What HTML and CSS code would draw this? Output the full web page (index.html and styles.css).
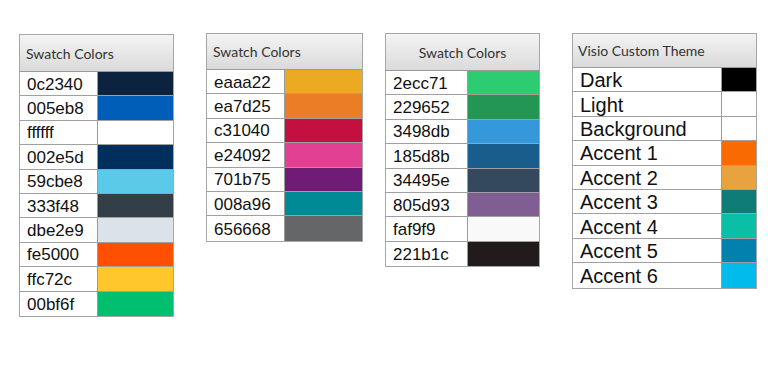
FILE: index.html
```html
<!DOCTYPE html>
<html>
<head>
<meta charset="utf-8">
<link rel="stylesheet" href="styles.css">
</head>
<body>
<div class="page">
  <div class="sw t1">
    <div class="head">Swatch Colors</div>
    <div class="row"><div class="lbl">0c2340</div><div class="chip" style="background:#0c2340"></div></div>
    <div class="row"><div class="lbl">005eb8</div><div class="chip" style="background:#005eb8"></div></div>
    <div class="row"><div class="lbl">ffffff</div><div class="chip" style="background:#ffffff"></div></div>
    <div class="row"><div class="lbl">002e5d</div><div class="chip" style="background:#002e5d"></div></div>
    <div class="row"><div class="lbl">59cbe8</div><div class="chip" style="background:#59cbe8"></div></div>
    <div class="row"><div class="lbl">333f48</div><div class="chip" style="background:#333f48"></div></div>
    <div class="row"><div class="lbl">dbe2e9</div><div class="chip" style="background:#dbe2e9"></div></div>
    <div class="row"><div class="lbl">fe5000</div><div class="chip" style="background:#fe5000"></div></div>
    <div class="row"><div class="lbl">ffc72c</div><div class="chip" style="background:#ffc72c"></div></div>
    <div class="row"><div class="lbl">00bf6f</div><div class="chip" style="background:#00bf6f"></div></div>
  </div>
  <div class="sw t2">
    <div class="head">Swatch Colors</div>
    <div class="row"><div class="lbl">eaaa22</div><div class="chip" style="background:#eaaa22"></div></div>
    <div class="row"><div class="lbl">ea7d25</div><div class="chip" style="background:#ea7d25"></div></div>
    <div class="row"><div class="lbl">c31040</div><div class="chip" style="background:#c31040"></div></div>
    <div class="row"><div class="lbl">e24092</div><div class="chip" style="background:#e24092"></div></div>
    <div class="row"><div class="lbl">701b75</div><div class="chip" style="background:#701b75"></div></div>
    <div class="row"><div class="lbl">008a96</div><div class="chip" style="background:#008a96"></div></div>
    <div class="row"><div class="lbl">656668</div><div class="chip" style="background:#656668"></div></div>
  </div>
  <div class="sw t3">
    <div class="head center">Swatch Colors</div>
    <div class="row"><div class="lbl">2ecc71</div><div class="chip" style="background:#2ecc71"></div></div>
    <div class="row"><div class="lbl">229652</div><div class="chip" style="background:#229652"></div></div>
    <div class="row"><div class="lbl">3498db</div><div class="chip" style="background:#3498db"></div></div>
    <div class="row"><div class="lbl">185d8b</div><div class="chip" style="background:#185d8b"></div></div>
    <div class="row"><div class="lbl">34495e</div><div class="chip" style="background:#34495e"></div></div>
    <div class="row"><div class="lbl">805d93</div><div class="chip" style="background:#805d93"></div></div>
    <div class="row"><div class="lbl">faf9f9</div><div class="chip" style="background:#faf9f9"></div></div>
    <div class="row"><div class="lbl">221b1c</div><div class="chip" style="background:#221b1c"></div></div>
  </div>
  <div class="sw t4">
    <div class="head">Visio Custom Theme</div>
    <div class="row"><div class="lbl">Dark</div><div class="chip" style="background:#000000"></div></div>
    <div class="row"><div class="lbl">Light</div><div class="chip" style="background:#ffffff"></div></div>
    <div class="row"><div class="lbl">Background</div><div class="chip" style="background:#ffffff"></div></div>
    <div class="row"><div class="lbl">Accent 1</div><div class="chip" style="background:#f96a00"></div></div>
    <div class="row"><div class="lbl">Accent 2</div><div class="chip" style="background:#e8a23e"></div></div>
    <div class="row"><div class="lbl">Accent 3</div><div class="chip" style="background:#107c78"></div></div>
    <div class="row"><div class="lbl">Accent 4</div><div class="chip" style="background:#0bbfa6"></div></div>
    <div class="row"><div class="lbl">Accent 5</div><div class="chip" style="background:#0181ad"></div></div>
    <div class="row"><div class="lbl">Accent 6</div><div class="chip" style="background:#00bbeb"></div></div>
  </div>
</div>
</body>
</html>
```
FILE: styles.css
```css
html, body {
  margin: 0;
  padding: 0;
  background: #ffffff;
}
.page {
  display: flex;
  align-items: flex-start;
  padding: 33px 0 0 19px;
}
.sw {
  border: 1px solid #a6a6a6;
  background: #ffffff;
  box-sizing: border-box;
  font-family: "Liberation Sans", Arial, sans-serif;
  color: #111;
}
.head {
  box-sizing: border-box;
  background: linear-gradient(#f4f4f4, #dadada);
  border-bottom: 1px solid #9a9a9a;
  font-family: Lato, "Open Sans", sans-serif;
  font-size: 14px;
  color: #333;
  display: flex;
  align-items: center;
  padding-left: 6px;
}
.head.center {
  justify-content: center;
  padding-left: 0;
}
.row {
  display: flex;
  height: 24.4px;
  box-sizing: border-box;
  border-bottom: 1px solid #a0a0a0;
}
.row:last-child {
  border-bottom: none;
}
.lbl {
  box-sizing: border-box;
  border-right: 1px solid #9a9a9a;
  display: flex;
  align-items: center;
  padding-left: 7px;
  padding-top: 1px;
  font-size: 17px;
  line-height: 1;
}
.chip {
  flex: 1;
}
.t1 {
  width: 155px;
  margin-top: 1px;
}
.t1 .head { height: 37px; }
.t1 .lbl { width: 78px; }
.t2 {
  width: 157px;
  margin-left: 32px;
}
.t2 .head { height: 36px; }
.t2 .lbl { width: 78px; }
.t3 {
  width: 155px;
  margin-left: 22px;
}
.t3 .head { height: 37px; }
.t3 .lbl { width: 82px; }
.t4 {
  width: 185px;
  margin-left: 32px;
}
.t4 .head {
  height: 34px;
  padding-left: 5px;
}
.t4 .lbl {
  width: 149px;
  font-size: 20px;
  padding-left: 7px;
}
```
